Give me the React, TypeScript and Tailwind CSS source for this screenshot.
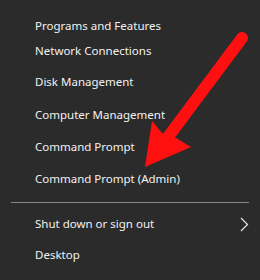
import React from "react";

const Row = ({ label, mt, chevron }: { label: string; mt: string; chevron?: boolean }) => (
  <div className={`${mt} h-[20px] flex items-center justify-between pl-[35px] pr-[11px]`}>
    <span>{label}</span>
    {chevron && (
      <svg width="9" height="15" viewBox="0 0 9 15" className="text-[#e6e6e6]">
        <path d="M1 1 L7.5 7.5 L1 14" fill="none" stroke="currentColor" strokeWidth="1.2" />
      </svg>
    )}
  </div>
);

export default function App() {
  return (
    <div
      className="relative w-[260px] h-[280px] bg-[#2b2b2b] text-[#f2f2f2] text-[11.5px] overflow-hidden"
      style={{ fontFamily: '"Noto Sans", "Open Sans", sans-serif' }}
    >
      <div className="flex flex-col pt-[16px]">
        <Row label="Programs and Features" mt="mt-0" />
        <Row label="Network Connections" mt="mt-[5px]" />
        <Row label="Disk Management" mt="mt-[11px]" />
        <Row label="Computer Management" mt="mt-[13px]" />
        <Row label="Command Prompt" mt="mt-[12px]" />
        <Row label="Command Prompt (Admin)" mt="mt-[12px]" />
        <div className="mt-[13px] mx-[11px] h-px bg-[#8a8a8a]" />
        <Row label="Shut down or sign out" mt="mt-[11px]" chevron />
        <Row label="Desktop" mt="mt-[11px]" />
      </div>
      <svg className="absolute left-0 top-0" width="260" height="280" viewBox="0 0 260 280">
        <line x1="242" y1="38" x2="168" y2="137" stroke="#ff1010" strokeWidth="12" strokeLinecap="round" />
        <polygon points="145,167 152,121 162,133 176,138 191,147" fill="#ff1010" />
      </svg>
    </div>
  );
}
